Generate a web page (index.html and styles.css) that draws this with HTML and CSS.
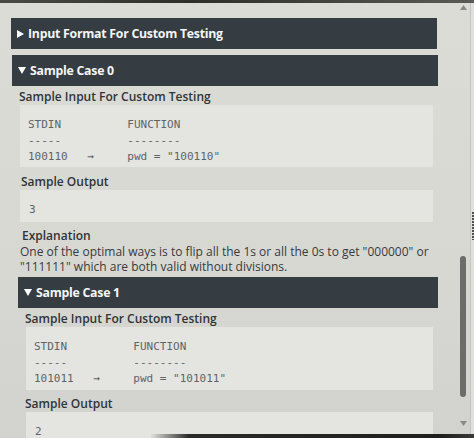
FILE: index.html
```html
<!DOCTYPE html>
<html lang="en">
<head>
<meta charset="utf-8">
<title>Sample Cases</title>
<link rel="stylesheet" href="styles.css">
</head>
<body>
<div class="screen">
  <div class="edge-top"></div>
  <div class="viewport">
    <div class="content">
      <div class="bar bar-first">
        <svg class="tri" width="7" height="8" viewBox="0 0 7 8"><path d="M0 0 L7 4 L0 8 Z" fill="#fff"/></svg>
        <span>Input Format For Custom Testing</span>
      </div>
      <section class="case case0">
        <div class="bar">
          <svg class="tri" width="8" height="7" viewBox="0 0 8 7"><path d="M0 0 L8 0 L4 7 Z" fill="#fff"/></svg>
          <span>Sample Case 0</span>
        </div>
        <h4 class="label">Sample Input For Custom Testing</h4>
        <pre class="code">STDIN          FUNCTION
-----          --------
100110   →     pwd = "100110"</pre>
        <h4 class="label label-out">Sample Output</h4>
        <pre class="code code-out">3</pre>
        <h4 class="label label-exp">Explanation</h4>
        <p class="explain">One of the optimal ways is to flip all the 1s or all the 0s to get "000000" or "111111" which are both valid without divisions.</p>
      </section>
      <section class="case case1">
        <div class="bar">
          <svg class="tri" width="8" height="7" viewBox="0 0 8 7"><path d="M0 0 L8 0 L4 7 Z" fill="#fff"/></svg>
          <span>Sample Case 1</span>
        </div>
        <h4 class="label">Sample Input For Custom Testing</h4>
        <pre class="code">STDIN          FUNCTION
-----          --------
101011   →     pwd = "101011"</pre>
        <h4 class="label label-out">Sample Output</h4>
        <pre class="code code-out">2</pre>
      </section>
    </div>
    <div class="scrollbar">
      <svg class="arrow" width="7" height="5" viewBox="0 0 7 5"><path d="M0 5 L3.5 0 L7 5 Z" fill="#8a8a88"/></svg>
      <div class="track"><div class="thumb"></div></div>
      <svg class="arrow" width="7" height="5" viewBox="0 0 7 5"><path d="M0 0 L7 0 L3.5 5 Z" fill="#8a8a88"/></svg>
    </div>
    <div class="gutter"><div class="dots"></div></div>
  </div>
  <div class="edge-bottom"></div>
</div>
</body>
</html>
```
FILE: styles.css
```css
* { box-sizing: border-box; }
html, body {
  margin: 0;
  padding: 0;
  width: 474px;
  height: 438px;
  overflow: hidden;
  background: #d9d9d4;
  font-family: "Open Sans", "Noto Sans", sans-serif;
}
.screen {
  position: relative;
  display: flex;
  flex-direction: column;
  height: 438px;
}
.edge-top {
  height: 3px;
  background: linear-gradient(90deg, #4a4a46, #2e2e2c 40%, #5a5a56);
}
.viewport {
  flex: 1;
  display: flex;
  background: linear-gradient(180deg, #dcdcd7 0%, #d8d8d3 60%, #d2d3ce 100%);
  overflow: hidden;
}
.content {
  width: 456px;
  padding: 15px 0 0 11px;
}
.bar {
  display: flex;
  align-items: center;
  gap: 4px;
  height: 31px;
  width: 426px;
  padding-left: 6px;
  background: #353c42;
  color: #f4f5f6;
  font-weight: 700;
  font-size: 12.3px;
  letter-spacing: -0.25px;
}
.bar .tri { flex: none; }
.case0 { margin-top: 6px; padding-left: 1px; }
.case1 { margin-top: 3px; padding-left: 7px; }
.case1 .bar { width: 420px; }
.label {
  margin: 3px 0 0 7px;
  font-size: 12px;
  line-height: 16px;
  font-weight: 600;
  color: #2f3439;
}
.code {
  margin: 0 0 0 8px;
  width: 413px;
  padding: 12px 8px 2px;
  background: #e4e4e0;
  font-family: "DejaVu Sans Mono", "Liberation Mono", monospace;
  font-size: 11px;
  line-height: 16px;
  color: #5f6468;
}
.case1 .code { width: 407px; padding-bottom: 3px; }
.label-out { margin-top: 7px; margin-left: 9px; }
.case1 .label-out { margin-top: 6px; }
.code-out { padding: 12px 9px 4px; }
.case1 .code-out { padding-bottom: 4px; }
.label-exp { margin-top: 7px; margin-left: 10px; line-height: 14px; }
.explain {
  margin: 1px 0 0 8px;
  width: 412px;
  font-size: 12px;
  line-height: 15px;
  color: #363b40;
}
.case1 .label { margin-left: 7px; }
.scrollbar {
  width: 14px;
  display: flex;
  flex-direction: column;
  align-items: center;
  padding: 2px 0 12px;
}
.track {
  flex: 1;
  width: 100%;
  display: flex;
  justify-content: center;
  padding-top: 246px;
  padding-bottom: 24px;
}
.thumb {
  width: 6px;
  height: 100%;
  border-radius: 3px;
  background: #6c6c6a;
}
.gutter {
  flex: 1;
  border-left: 1px solid #c4c4c0;
  background: #e0e0dc;
  padding-top: 209px;
}
.dots {
  width: 2px;
  height: 28px;
  margin-left: 1px;
  background: repeating-linear-gradient(180deg, #505050 0 1.5px, transparent 1.5px 3px);
}
.edge-bottom {
  position: absolute;
  left: 150px;
  right: 0;
  bottom: 0;
  height: 4px;
  background: linear-gradient(90deg, rgba(42,42,40,0), #2a2a28 12%, #1e1e1c 90%, #3a3a38);
}
```
